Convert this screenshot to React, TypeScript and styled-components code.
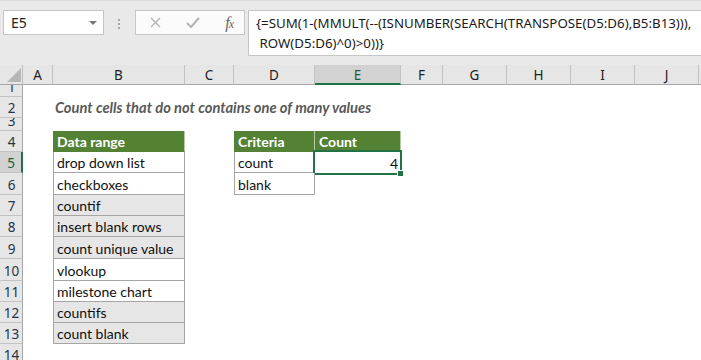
import React from "react";
import styled, { createGlobalStyle } from "styled-components";

const GlobalStyle = createGlobalStyle`
  html, body { margin: 0; padding: 0; background: #fff; }
  body { width: 701px; height: 360px; overflow: hidden; }
`;

const Window = styled.div`
  width: 701px;
  height: 360px;
  overflow: hidden;
  background: #fff;
  display: flex;
  flex-direction: column;
`;

const FormulaBar = styled.div`
  height: 65px;
  flex: none;
  box-sizing: border-box;
  background: #e9e9e9;
  border-top: 1px solid #d9d9d9;
  display: flex;
  align-items: flex-start;
  padding: 9px 0 0 3px;
  font-family: "Noto Sans", "Open Sans", sans-serif;
`;

const NameBox = styled.div`
  width: 101px;
  height: 25px;
  box-sizing: border-box;
  background: #fff;
  border: 1px solid #c6c6c6;
  display: flex;
  align-items: center;
  justify-content: space-between;
  padding: 0 6px 0 7px;
  font-size: 14px;
  color: #222;
`;

const Caret = styled.span`
  width: 0;
  height: 0;
  border-left: 4px solid transparent;
  border-right: 4px solid transparent;
  border-top: 4px solid #777;
`;

const Grip = styled.div`
  margin: 9px 15px 0 14px;
  display: flex;
  flex-direction: column;
  gap: 2px;
  span {
    width: 2px;
    height: 2px;
    background: #a8a8a8;
  }
`;

const ButtonBox = styled.div`
  width: 110px;
  height: 25px;
  box-sizing: border-box;
  background: #fbfbfb;
  border: 1px solid #c6c6c6;
  display: flex;
  align-items: center;
  justify-content: space-between;
  padding: 0 11px 0 14px;
`;

const Fx = styled.span`
  font-family: "Liberation Serif", serif;
  font-style: italic;
  font-size: 16px;
  color: #666;
  letter-spacing: -1px;
  i {
    font-size: 12px;
  }
`;

const FormulaBox = styled.div`
  flex: 1;
  height: 46px;
  margin-left: 3px;
  box-sizing: border-box;
  background: #fff;
  border: 1px solid #c6c6c6;
  border-right: none;
  padding: 2px 0 0 7px;
  font-size: 13.3px;
  line-height: 20px;
  color: #1a1a1a;
  white-space: pre;
`;

const Sheet = styled.div`
  display: grid;
  grid-template-columns: 23px 30px 132px 49px 81px 86px 42px 64px 64px 64px 64px 2px;
  grid-template-rows: 20px 12px 21px 13px 21px 21px 22px 21px 21px 22px 22px 21px 21px 21px 21px;
  font-family: Lato, "Open Sans", sans-serif;
`;

const Corner = styled.div`
  grid-row: 1;
  grid-column: 1;
  background: #e6e6e6;
  border-right: 1px solid #bdbdbd;
  border-bottom: 1px solid #a6a6a6;
  box-sizing: border-box;
  display: flex;
  align-items: flex-end;
  justify-content: flex-end;
  padding: 0 1px 2px 0;
`;

const ColHead = styled.div<{ $col: number; $active?: boolean }>`
  grid-row: 1;
  grid-column: ${(p) => p.$col};
  box-sizing: border-box;
  background: ${(p) => (p.$active ? "#d2d2d2" : "#e6e6e6")};
  border-right: 1px solid #c2c2c2;
  border-bottom: ${(p) => (p.$active ? "2px solid #217346" : "1px solid #a6a6a6")};
  display: flex;
  align-items: center;
  justify-content: center;
  font-family: "Noto Sans", "Open Sans", sans-serif;
  font-size: 13.5px;
  color: ${(p) => (p.$active ? "#1e5e3a" : "#222")};
  padding-top: 1px;
`;

const HeadFill = styled.div`
  grid-row: 1;
  grid-column: 12;
  background: #e6e6e6;
  border-bottom: 1px solid #a6a6a6;
`;

const RowHead = styled.div<{ $row: number; $active?: boolean }>`
  grid-row: ${(p) => p.$row + 1};
  grid-column: 1;
  box-sizing: border-box;
  overflow: hidden;
  background: ${(p) => (p.$active ? "#d2d2d2" : "#e6e6e6")};
  border-bottom: 1px solid #c2c2c2;
  border-right: ${(p) => (p.$active ? "2px solid #217346" : "1px solid #a6a6a6")};
  display: flex;
  align-items: flex-end;
  justify-content: center;
  font-family: "Noto Sans", "Open Sans", sans-serif;
  font-size: 13.5px;
  line-height: 18px;
  color: ${(p) => (p.$active ? "#1e5e3a" : "#263448")};
  padding-left: 1px;
`;

const Title = styled.div`
  grid-row: 3;
  grid-column: 3 / span 9;
  display: flex;
  align-items: flex-end;
  padding: 0 0 2px 2px;
  font-size: 14.7px;
  font-weight: 700;
  font-style: italic;
  color: #595959;
  white-space: nowrap;
`;

const Cell = styled.div<{ $row: number; $col: number; $head?: boolean; $shade?: boolean; $align?: string }>`
  grid-row: ${(p) => p.$row + 1};
  grid-column: ${(p) => p.$col};
  position: relative;
  box-sizing: border-box;
  background: ${(p) => (p.$head ? "#548235" : p.$shade ? "#e7e6e6" : "#fff")};
  border-left: 1px solid ${(p) => (p.$head ? "#548235" : "#a6a6a6")};
  border-right: 1px solid ${(p) => (p.$head ? "#b8c9a8" : "#a6a6a6")};
  border-bottom: 1px solid ${(p) => (p.$head ? "#548235" : "#a6a6a6")};
  display: flex;
  align-items: flex-end;
  justify-content: ${(p) => p.$align || "flex-start"};
  padding: 0 3px 1px 3px;
  font-size: 14px;
  font-weight: ${(p) => (p.$head ? 700 : 400)};
  color: ${(p) => (p.$head ? "#fff" : "#111")};
  white-space: nowrap;
`;

const SelectedCell = styled(Cell)`
  border: none;
`;

const Selection = styled.div`
  position: absolute;
  left: -2px;
  top: -2px;
  right: -1px;
  bottom: -2px;
  border: 2px solid #217346;
  pointer-events: none;
`;

const Handle = styled.div`
  position: absolute;
  right: -4px;
  bottom: -4px;
  width: 5px;
  height: 5px;
  background: #217346;
  border: 1px solid #fff;
`;

const dataRows = [
  { text: "drop down list", shade: false },
  { text: "checkboxes", shade: false },
  { text: "countif", shade: true },
  { text: "insert blank rows", shade: true },
  { text: "count unique value", shade: true },
  { text: "vlookup", shade: false },
  { text: "milestone chart", shade: false },
  { text: "countifs", shade: true },
  { text: "count blank", shade: true },
];

const columns = ["A", "B", "C", "D", "E", "F", "G", "H", "I", "J"];
const rowNumbers = [1, 2, 3, 4, 5, 6, 7, 8, 9, 10, 11, 12, 13, 14];

export default function App() {
  return (
    <Window>
      <GlobalStyle />
      <FormulaBar>
        <NameBox>
          <span>E5</span>
          <Caret />
        </NameBox>
        <Grip>
          <span />
          <span />
          <span />
        </Grip>
        <ButtonBox>
          <svg width="11" height="11" viewBox="0 0 11 11">
            <path d="M1 1 L10 10 M10 1 L1 10" stroke="#b4b4b4" strokeWidth="1.4" fill="none" />
          </svg>
          <svg width="14" height="11" viewBox="0 0 14 11">
            <path d="M1 6 L5 10 L13 1" stroke="#b4b4b4" strokeWidth="2" fill="none" />
          </svg>
          <Fx>
            f<i>x</i>
          </Fx>
        </ButtonBox>
        <FormulaBox>
          {"{=SUM(1-(MMULT(--(ISNUMBER(SEARCH(TRANSPOSE(D5:D6),B5:B13))),\n ROW(D5:D6)^0)>0))}"}
        </FormulaBox>
      </FormulaBar>

      <Sheet>
        <Corner>
          <svg width="14" height="14" viewBox="0 0 14 14">
            <path d="M14 0 L14 14 L0 14 Z" fill="#b6b6b6" />
          </svg>
        </Corner>
        {columns.map((c, i) => (
          <ColHead key={c} $col={i + 2} $active={c === "E"}>
            {c}
          </ColHead>
        ))}
        <HeadFill />
        {rowNumbers.map((r) => (
          <RowHead key={r} $row={r} $active={r === 5}>
            {r}
          </RowHead>
        ))}

        <Title>Count cells that do not contains one of many values</Title>

        <Cell $row={4} $col={3} $head>
          Data range
        </Cell>
        {dataRows.map((d, i) => (
          <Cell key={d.text} $row={5 + i} $col={3} $shade={d.shade}>
            {d.text}
          </Cell>
        ))}

        <Cell $row={4} $col={5} $head>
          Criteria
        </Cell>
        <Cell $row={4} $col={6} $head>
          Count
        </Cell>
        <Cell $row={5} $col={5}>
          count
        </Cell>
        <SelectedCell $row={5} $col={6} $align="flex-end">
          4
          <Selection>
            <Handle />
          </Selection>
        </SelectedCell>
        <Cell $row={6} $col={5}>
          blank
        </Cell>
      </Sheet>
    </Window>
  );
}
